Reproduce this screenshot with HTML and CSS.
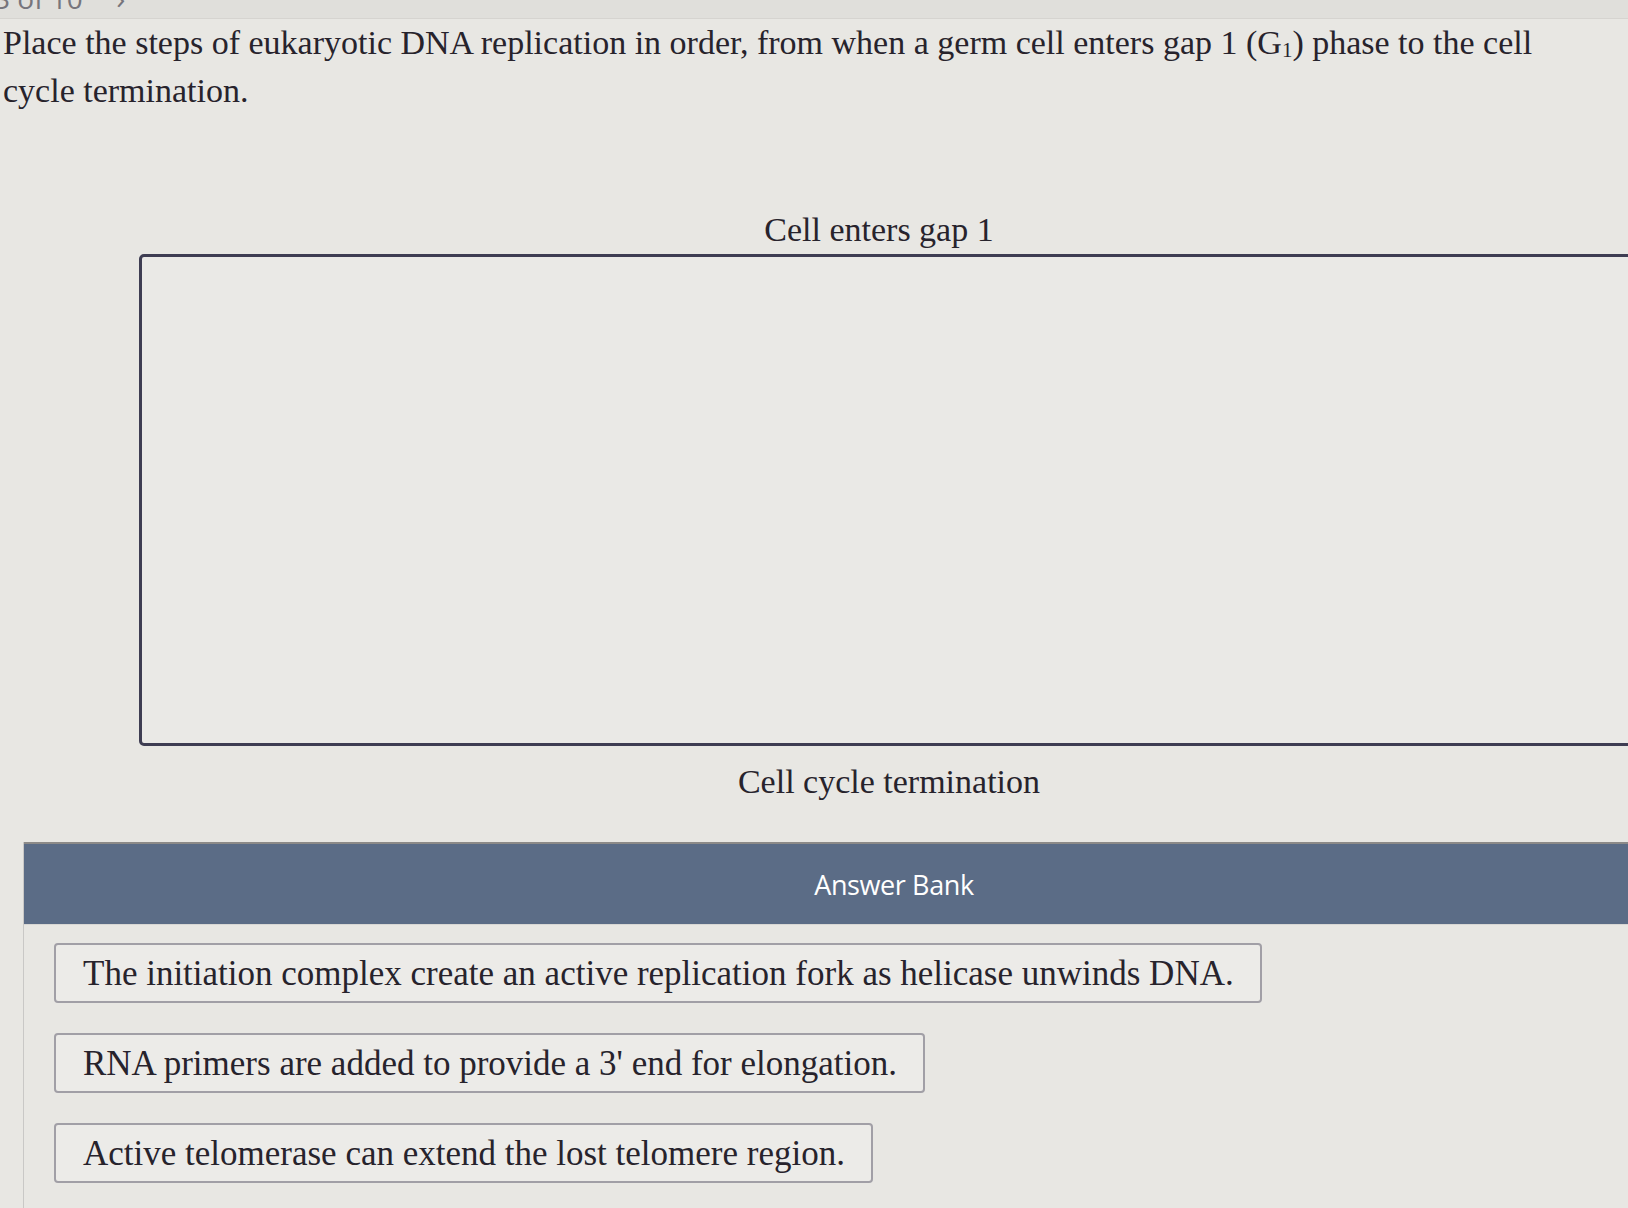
FILE: index.html
```html
<!DOCTYPE html>
<html lang="en">
<head>
<meta charset="utf-8">
<title>Question 3 of 10</title>
<link rel="stylesheet" href="styles.css">
</head>
<body>
  <div class="topbar">
    <span class="pager">3 of 10 <span class="chev">&#x203A;</span></span>
  </div>

  <p class="prompt">Place the steps of eukaryotic DNA replication in order, from when a germ cell enters gap 1 (G<sub class="idx">1</sub>) phase to the cell<br>cycle termination.</p>

  <section class="sequence">
    <div class="endpoint start">Cell enters gap 1</div>
    <div class="dropzone"></div>
    <div class="endpoint finish">Cell cycle termination</div>
  </section>

  <section class="bank">
    <header class="bank-head">Answer Bank</header>
    <div class="bank-body">
      <div class="card">The initiation complex create an active replication fork as helicase unwinds DNA.</div>
      <div class="card">RNA primers are added to provide a 3' end for elongation.</div>
      <div class="card">Active telomerase can extend the lost telomere region.</div>
    </div>
  </section>
</body>
</html>
```

FILE: styles.css
```css
html, body {
  margin: 0;
  padding: 0;
  background: #e8e7e3;
  overflow: hidden;
}

body {
  width: 1628px;
  height: 1208px;
  font-family: "Liberation Serif", "Times New Roman", serif;
  color: #27232c;
}

/* pager strip, scrolled mostly out of view */
.topbar {
  height: 18px;
  overflow: hidden;
  background: #e0dfdb;
  border-bottom: 1px solid #d6d4d0;
}

.pager {
  display: block;
  margin-top: -19px;
  margin-left: -6px;
  font-family: "Open Sans", "Liberation Sans", sans-serif;
  font-size: 28px;
  line-height: 34px;
  color: #77757c;
}

.pager .chev {
  margin-left: 26px;
  font-size: 30px;
}

.prompt {
  margin: 0;
  padding: 0 40px 0 3px;
  font-size: 34px;
  line-height: 48px;
}

.prompt .idx {
  font-size: 21px;
  line-height: 0;
  vertical-align: -3px;
}

.sequence {
  display: flex;
  flex-direction: column;
  padding-top: 95px;
}

.endpoint {
  font-size: 34px;
  line-height: 40px;
  text-align: center;
}

.endpoint.start {
  padding-left: 130px;
}

.endpoint.finish {
  padding-left: 150px;
  margin-top: 16px;
}

.dropzone {
  margin: 4px -20px 0 139px;
  height: 486px;
  border: 3px solid #3e3d52;
  border-radius: 5px;
  background: #eae9e6;
}

.bank {
  margin: 40px 0 0 23px;
  border-left: 1px solid #c9c8c6;
}

.bank-head {
  height: 80px;
  display: flex;
  align-items: center;
  justify-content: center;
  padding-left: 136px;
  background: #5b6c86;
  border-top: 2px solid #8c8a88;
  color: #ffffff;
  font-family: "Open Sans", "Liberation Sans", sans-serif;
  font-size: 27px;
  letter-spacing: -0.4px;
}

.bank-body {
  display: flex;
  flex-direction: column;
  align-items: flex-start;
  gap: 30px;
  padding: 18px 0 60px 30px;
  border-top: 1px solid #d8d7d4;
}

.card {
  padding: 9px 26px 7px 27px;
  border: 2px solid #a19fa6;
  border-radius: 4px;
  background: #ecebe8;
  font-size: 35px;
  line-height: 40px;
  white-space: nowrap;
}
```
